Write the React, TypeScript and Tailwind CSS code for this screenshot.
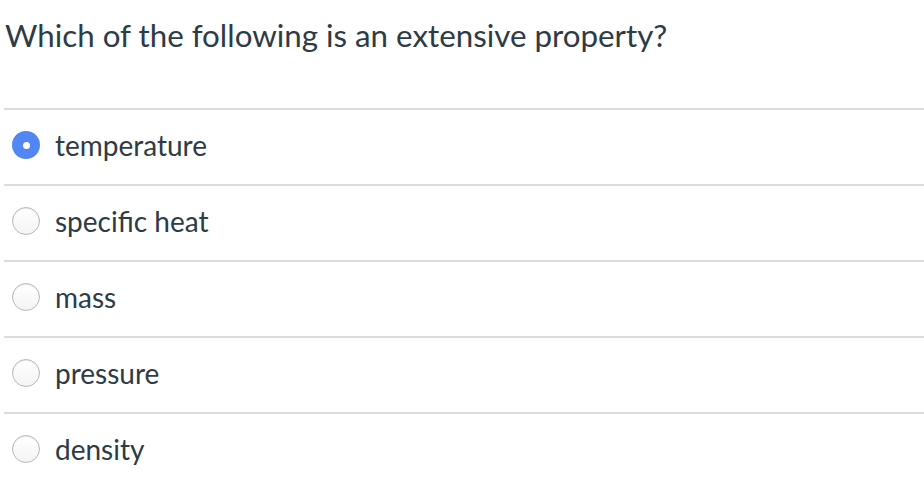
import React, { useState } from 'react';

const OPTIONS = ["temperature", "specific heat", "mass", "pressure", "density"];

export default function App() {
  const [selected, setSelected] = useState(0);

  return (
    <div className="w-[924px] h-[494px] bg-white text-[#2d3b45] font-['Lato','Noto_Sans',sans-serif] overflow-hidden">
      <h1 className="pl-[5px] pt-[15px] h-[108px] text-[31.3px] leading-[40px] font-normal">
        Which of the following is an extensive property?
      </h1>

      <div className="ml-[4px]">
        {OPTIONS.map((label, i) => (
          <div key={label} className="border-t-2 border-[#dcdcdc] h-[76px] pb-[4px] flex items-center">
            <button
              type="button"
              onClick={() => setSelected(i)}
              className="flex items-center gap-[15px] pl-[8px]"
            >
              {selected === i ? (
                <span className="w-[28px] h-[28px] rounded-full bg-[#5186f3] flex items-center justify-center">
                  <span className="w-[7px] h-[7px] rounded-full bg-white" />
                </span>
              ) : (
                <span className="w-[28px] h-[28px] rounded-full border border-[#b8b8b8] bg-gradient-to-b from-white to-[#f4f4f4] shadow-[inset_0_1px_1px_rgba(0,0,0,0.08)]" />
              )}
              <span className="text-[28px] leading-[30px]">{label}</span>
            </button>
          </div>
        ))}
      </div>
    </div>
  );
}
